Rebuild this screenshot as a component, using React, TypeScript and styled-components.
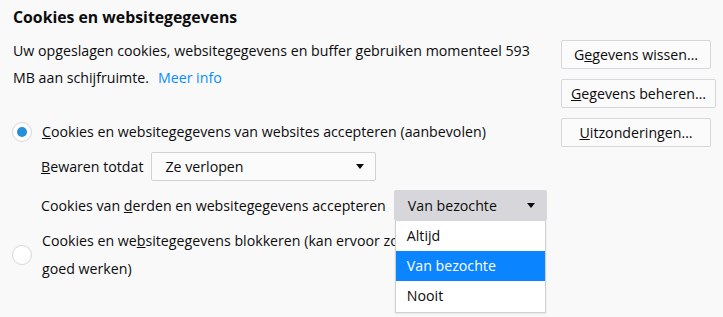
import React from "react";
import styled, { createGlobalStyle } from "styled-components";

const GlobalStyle = createGlobalStyle`
  html, body {
    margin: 0;
    padding: 0;
    background: #f9f9fa;
  }
  body {
    font-family: "Open Sans", "Noto Sans", sans-serif;
    font-size: 14.2px;
    color: #0c0c0d;
  }
`;

const Page = styled.div`
  width: 723px;
  height: 317px;
  box-sizing: border-box;
  padding: 4px 7px 0 13px;
  overflow: hidden;
`;

const Title = styled.h2`
  margin: 0;
  font-size: 15.8px;
  font-weight: 700;
  line-height: 26px;
`;

const Section = styled.div`
  display: flex;
  align-items: flex-start;
`;

const Main = styled.div`
  flex: none;
  width: 548px;
`;

const Description = styled.p`
  margin: 7px 0 0;
  width: 536px;
  line-height: 27px;
`;

const Link = styled.a`
  color: #0a8dff;
  text-decoration: none;
  margin-left: 9px;
  cursor: pointer;
`;

const Buttons = styled.div`
  display: flex;
  flex-direction: column;
  align-items: flex-start;
  gap: 10px;
  margin-top: 10px;
`;

const Button = styled.button`
  min-width: 150px;
  height: 29px;
  padding: 0 9px;
  box-sizing: border-box;
  border: 1px solid #d7d7db;
  border-radius: 2px;
  background: #fbfbfb;
  font: inherit;
  color: inherit;
  text-align: center;
  white-space: nowrap;
`;

const RadioRow = styled.label<{ $top: number }>`
  display: flex;
  align-items: center;
  gap: 10px;
  margin-top: ${(p) => p.$top}px;
  min-height: 28px;
  line-height: 28px;
`;

const Radio = styled.span<{ $checked?: boolean }>`
  flex: none;
  width: 20px;
  height: 20px;
  margin-left: -1px;
  box-sizing: border-box;
  border-radius: 50%;
  border: 1px solid #d7d7db;
  background: #fff;
  display: flex;
  align-items: center;
  justify-content: center;

  &::after {
    content: "";
    display: ${(p) => (p.$checked ? "block" : "none")};
    width: 10px;
    height: 10px;
    border-radius: 50%;
    background: #2490d8;
  }
`;

const SubRow = styled.div<{ $top: number }>`
  display: flex;
  align-items: center;
  margin: ${(p) => p.$top}px 0 0 28px;
`;

const FieldLabel = styled.span`
  margin-right: 8px;
  white-space: nowrap;
`;

const SelectWrap = styled.div`
  position: relative;
`;

const Select = styled.div<{ $open?: boolean; $width: number }>`
  display: flex;
  align-items: center;
  justify-content: space-between;
  width: ${(p) => p.$width}px;
  height: ${(p) => (p.$open ? 31 : 29)}px;
  box-sizing: border-box;
  padding: 0 11px 0 13px;
  border: 1px solid ${(p) => (p.$open ? "#d7d7db" : "#d2d2d6")};
  border-radius: 2px;
  background: ${(p) => (p.$open ? "#d7d7db" : "#fbfbfb")};
  white-space: nowrap;
`;

const Arrow = styled.span`
  width: 0;
  height: 0;
  border-left: 4px solid transparent;
  border-right: 4px solid transparent;
  border-top: 5px solid #0c0c0d;
`;

const Menu = styled.ul`
  position: absolute;
  top: 100%;
  left: 1px;
  right: 1px;
  margin: 0;
  padding: 0 0 1px;
  list-style: none;
  background: #fff;
  border: 1px solid #cfcfd3;
  border-top: none;
  box-shadow: 0 1px 2px rgba(0, 0, 0, 0.08);
  z-index: 2;
`;

const MenuItem = styled.li<{ $active?: boolean }>`
  height: 30px;
  line-height: 30px;
  padding-left: 11px;
  background: ${(p) => (p.$active ? "#0a84ff" : "transparent")};
  color: ${(p) => (p.$active ? "#fff" : "inherit")};
`;

const App: React.FC = () => {
  return (
    <>
      <GlobalStyle />
      <Page>
        <Title>Cookies en websitegegevens</Title>
        <Section>
          <Main>
            <Description>
              Uw opgeslagen cookies, websitegegevens en buffer gebruiken momenteel 593 MB aan
              schijfruimte.
              <Link>Meer info</Link>
            </Description>

            <RadioRow $top={27}>
              <Radio $checked />
              <span>
                <u>C</u>ookies en websitegegevens van websites accepteren (aanbevolen)
              </span>
            </RadioRow>

            <SubRow $top={6}>
              <FieldLabel>
                <u>B</u>ewaren totdat
              </FieldLabel>
              <Select $width={225}>
                Ze verlopen
                <Arrow />
              </Select>
            </SubRow>

            <SubRow $top={9}>
              <FieldLabel>
                Cookies van <u>d</u>erden en websitegegevens accepteren
              </FieldLabel>
              <SelectWrap>
                <Select $open $width={153}>
                  Van bezochte
                  <Arrow />
                </Select>
                <Menu>
                  <MenuItem>Altijd</MenuItem>
                  <MenuItem $active>Van bezochte</MenuItem>
                  <MenuItem>Nooit</MenuItem>
                </Menu>
              </SelectWrap>
            </SubRow>

            <RadioRow $top={6}>
              <Radio />
              <span>
                Cookies en we<u>b</u>sitegegevens blokkeren (kan ervoor zorgen dat websites niet
                goed werken)
              </span>
            </RadioRow>
          </Main>

          <Buttons>
            <Button>
              G<u>e</u>gevens wissen…
            </Button>
            <Button>
              <u>G</u>egevens beheren…
            </Button>
            <Button>
              <u>U</u>itzonderingen…
            </Button>
          </Buttons>
        </Section>
      </Page>
    </>
  );
};

export default App;
